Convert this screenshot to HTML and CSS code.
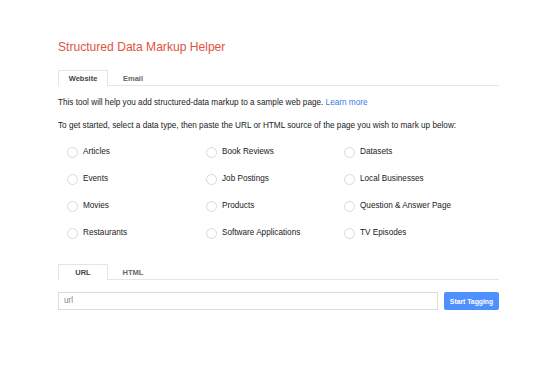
FILE: index.html
```html
<!DOCTYPE html>
<html>
<head>
<meta charset="utf-8">
<link rel="stylesheet" href="styles.css">
</head>
<body>
<div class="page">
  <h1 class="title">Structured Data Markup Helper</h1>
  <div class="tabs">
    <div class="tab active">Website</div>
    <div class="tab">Email</div>
  </div>
  <p class="intro">This tool will help you add structured-data markup to a sample web page. <a href="#" class="link">Learn more</a></p>
  <p class="intro second">To get started, select a data type, then paste the URL or HTML source of the page you wish to mark up below:</p>
  <div class="types">
    <label class="type"><span class="radio"></span>Articles</label>
    <label class="type"><span class="radio"></span>Book Reviews</label>
    <label class="type"><span class="radio"></span>Datasets</label>
    <label class="type"><span class="radio"></span>Events</label>
    <label class="type"><span class="radio"></span>Job Postings</label>
    <label class="type"><span class="radio"></span>Local Businesses</label>
    <label class="type"><span class="radio"></span>Movies</label>
    <label class="type"><span class="radio"></span>Products</label>
    <label class="type"><span class="radio"></span>Question &amp; Answer Page</label>
    <label class="type"><span class="radio"></span>Restaurants</label>
    <label class="type"><span class="radio"></span>Software Applications</label>
    <label class="type"><span class="radio"></span>TV Episodes</label>
  </div>
  <div class="tabs source-tabs">
    <div class="tab active">URL</div>
    <div class="tab">HTML</div>
  </div>
  <div class="url-row">
    <div class="url-input">url</div>
    <button class="btn">Start Tagging</button>
  </div>
</div>
</body>
</html>
```
FILE: styles.css
```css
html, body {
  margin: 0;
  padding: 0;
  background: #fff;
}
body {
  font-family: "Liberation Sans", Arial, sans-serif;
  color: #222;
}
.page {
  width: 441px;
  padding: 38px 0 0 58px;
}
.title {
  margin: 0;
  font-weight: normal;
  font-size: 12.1px;
  line-height: 19px;
  color: #e0533f;
}
.tabs {
  display: flex;
  margin-top: 13px;
  border-bottom: 1px solid #e5e5e5;
  height: 15px;
}
.tab {
  width: 50px;
  box-sizing: border-box;
  text-align: center;
  font-size: 7.5px;
  font-weight: bold;
  color: #666;
  line-height: 14px;
  padding-top: 1px;
  border: 1px solid transparent;
  border-bottom: none;
}
.tab.active {
  border-color: #e5e5e5;
  background: #fff;
  color: #444;
  height: 16px;
}
.intro {
  margin: 11px 0 0;
  font-size: 8.2px;
  line-height: 12px;
  color: #222;
}
.intro.second {
  margin-top: 11px;
}
.link {
  color: #3b78e7;
  text-decoration: none;
}
.types {
  display: grid;
  grid-template-columns: 139px 138px 1fr;
  grid-auto-rows: 27px;
  margin-top: 10px;
  padding-left: 10px;
}
.type {
  display: flex;
  align-items: center;
  font-size: 8.2px;
  color: #222;
  height: 18px;
}
.radio {
  width: 11px;
  height: 11px;
  box-sizing: border-box;
  border: 1px solid #d9d9d9;
  border-radius: 50%;
  margin-left: -1px;
  margin-right: 5px;
  margin-top: 3px;
}
.source-tabs {
  margin-top: 14px;
}
.url-row {
  display: flex;
  margin-top: 12px;
  gap: 6px;
}
.url-input {
  flex: 1;
  height: 18px;
  box-sizing: border-box;
  border: 1px solid #dcdcdc;
  font-size: 8.2px;
  color: #888;
  line-height: 16px;
  padding-left: 5px;
}
.btn {
  width: 55px;
  height: 18px;
  border: none;
  border-radius: 2px;
  background: #4d90fe;
  color: #fff;
  font-family: "Liberation Sans", Arial, sans-serif;
  font-size: 6.8px;
  font-weight: bold;
  padding: 0;
}
```
